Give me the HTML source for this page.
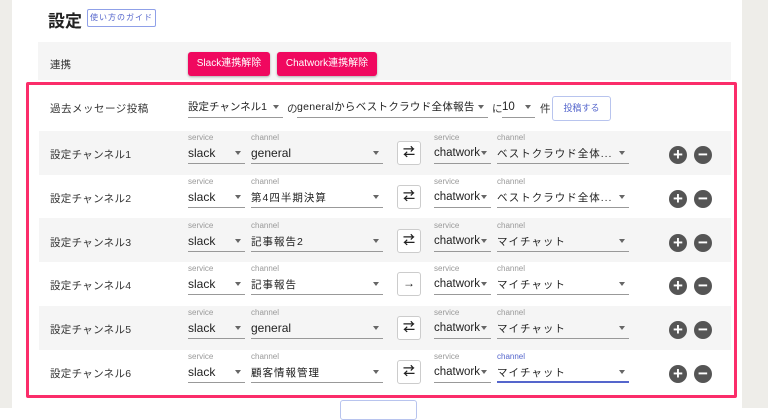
<!DOCTYPE html><html><head><meta charset="utf-8"><style>
*{margin:0;padding:0;box-sizing:border-box}
body{width:768px;height:408px;overflow:hidden;background:#fff;font-family:"Liberation Sans","Noto Sans CJK JP",sans-serif;position:relative;color:#333;white-space:nowrap}
.a{position:absolute}
.sl{position:absolute;border-bottom:1px solid #999;font-size:12px;color:#222;height:20px;line-height:18px;overflow:hidden;padding-right:14px}
.sl:after{content:"";position:absolute;right:4px;top:7px;border:3.5px solid transparent;border-top:4px solid #666}
.lb{position:absolute;font-size:8px;color:#999}
.lab{position:absolute;left:50px;font-size:10.5px;color:#333;letter-spacing:.3px}
.row{position:absolute;left:39px;width:692px;height:44px}
.sw{position:absolute;left:397px;width:24px;height:24px;border:1px solid #ccc;border-radius:3px;background:#fff;font-size:12px;text-align:center;line-height:21px;color:#222;font-weight:bold}
.c{position:absolute;width:18px;height:18px;border-radius:50%;background:#555;color:#fff;font-size:17px;font-weight:bold;text-align:center;line-height:17px}
.j{font-size:10.5px;letter-spacing:1px}
</style></head><body>
<div class="a" style="left:0;top:0;width:12px;height:408px;background:#eeede9"></div>
<div class="a" style="left:742px;top:0;width:26px;height:408px;background:#eeede9"></div>
<div class="a" style="left:48px;top:7px;font-size:17px;font-weight:bold;color:#222">設定</div>
<div class="a" style="left:87px;top:9px;width:69px;height:18px;border:1px solid #8fa0e8;border-radius:2px;display:flex;align-items:center;justify-content:center"><span style="font-size:8px;color:#5566cc;letter-spacing:1px;line-height:1">使い方のガイド</span></div>
<div class="a" style="left:38px;top:42px;width:693px;height:38px;background:#f5f5f5"></div>
<div class="a" style="left:50px;top:57px;font-size:10.5px">連携</div>
<div class="a" style="left:188px;top:52px;width:82px;height:24px;background:#f0085f;border-radius:3px;color:#fff;font-size:10px;text-align:center;line-height:24px;box-shadow:0 1px 2px rgba(0,0,0,.3)">Slack連携解除</div>
<div class="a" style="left:277px;top:52px;width:100px;height:24px;background:#f0085f;border-radius:3px;color:#fff;font-size:10px;text-align:center;line-height:24px;box-shadow:0 1px 2px rgba(0,0,0,.3)">Chatwork連携解除</div>
<div class="a" style="left:26px;top:82px;width:711px;height:316px;border:3px solid #fb2d6a;border-radius:2px"></div>
<div class="a" style="left:50px;top:101px;font-size:10.5px;letter-spacing:.5px">過去メッセージ投稿</div>
<div class="sl" style="left:188px;top:98px;width:95px;font-size:10.5px;padding-right:0">設定チャンネル1</div>
<div class="a" style="left:287px;top:101px;font-size:10.5px">の</div>
<div class="sl" style="left:297px;top:98px;width:191px;font-size:10.5px;padding-right:0;letter-spacing:.3px">generalからベストクラウド全体報告</div>
<div class="a" style="left:492px;top:101px;font-size:10.5px">に</div>
<div class="sl" style="left:502px;top:98px;width:33px;font-size:11.5px">10</div>
<div class="a" style="left:540px;top:101px;font-size:10.5px">件</div>
<div class="a" style="left:552px;top:96px;width:59px;height:25px;border:1px solid #b8c4ee;border-radius:3px;font-size:9px;color:#5566cc;text-align:center;line-height:23px">投稿する</div>

<div class="row" style="top:131px;background:#f5f5f5"></div>
<div class="row" style="top:218px;background:#f5f5f5"></div>
<div class="row" style="top:306px;background:#f5f5f5"></div>

<div id="rows"></div>
<script>
var d=[["1","general","ベストクラウド全体...","⇄"],["2","第4四半期決算","ベストクラウド全体...","⇄"],["3","記事報告2","マイチャット","⇄"],["4","記事報告","マイチャット","→"],["5","general","マイチャット","⇄"],["6","顧客情報管理","マイチャット","⇄"]];
function v(s){return /^[a-z]+$/.test(s)?s:'<span class="j">'+s+'</span>';}
var h="";
d.forEach(function(r,i){var t=131+i*43.8;
h+='<div class="lab" style="top:'+(t+16)+'px">設定チャンネル'+r[0]+'</div>';
h+='<div class="lb" style="left:188px;top:'+(t+2)+'px">service</div><div class="lb" style="left:251px;top:'+(t+2)+'px">channel</div>';
h+='<div class="lb" style="left:434px;top:'+(t+2)+'px">service</div><div class="lb" style="left:497px;top:'+(t+2)+'px'+(i==5?';color:#5566cc':'')+'">channel</div>';
h+='<div class="sl" style="left:188px;top:'+(t+13)+'px;width:57px">slack</div>';
h+='<div class="sl" style="left:251px;top:'+(t+13)+'px;width:132px">'+v(r[1])+'</div>';
h+='<div class="sw" style="top:'+(t+10)+'px">'+r[3]+'</div>';
h+='<div class="sl" style="left:434px;top:'+(t+13)+'px;width:57px;font-size:11.5px;padding-right:0">chatwork</div>';
h+='<div class="sl" style="left:497px;top:'+(t+13)+'px;width:132px'+(i==5?';border-bottom:2px solid #5566cc':'')+'">'+v(r[2])+'</div>';
h+='<div class="c" style="left:669px;top:'+(t+15)+'px">+</div><div class="c" style="left:694px;top:'+(t+15)+'px">−</div>';
});
document.getElementById("rows").innerHTML=h;
</script>
<div class="a" style="left:340px;top:400px;width:77px;height:20px;border:1px solid #b8c4ee;border-radius:3px"></div>
</body></html>
